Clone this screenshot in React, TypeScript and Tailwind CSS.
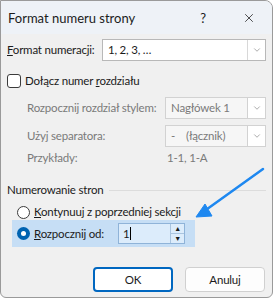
import { ChevronDown, X } from "lucide-react";
import clsx from "clsx";

function Combo({ value, disabled, className }: { value: React.ReactNode; disabled?: boolean; className?: string }) {
  return (
    <div
      className={clsx(
        "flex h-[22px] items-stretch border",
        disabled ? "border-[#d2d2d2] bg-[#f6f6f6] text-[#7a7a7a]" : "border-[#b8b8b8] bg-white text-[#1b1b1b]",
        className
      )}
    >
      <div className="flex flex-1 items-center whitespace-pre px-[5px]">{value}</div>
      <div
        className={clsx(
          "flex w-[18px] items-center justify-center border-l",
          disabled ? "border-[#d2d2d2] bg-white" : "border-[#d8d8d8] bg-white"
        )}
      >
        <ChevronDown className="h-[10px] w-[10px] text-[#7a7a7a]" strokeWidth={1.5} />
      </div>
    </div>
  );
}

function Radio({ checked }: { checked?: boolean }) {
  return checked ? (
    <div className="flex h-[13px] w-[13px] shrink-0 items-center justify-center rounded-full bg-[#0063b1]">
      <div className="h-[5px] w-[5px] rounded-full bg-white" />
    </div>
  ) : (
    <div className="h-[13px] w-[13px] shrink-0 rounded-full border border-[#3b3b3b] bg-white" />
  );
}

export default function App() {
  return (
    <div className="relative h-[300px] w-[274px] bg-white font-['Segoe_UI','Lato',sans-serif] text-[11.5px] leading-[14px] tracking-[-0.2px] text-[#1b1b1b]">
      <div className="flex h-[298px] w-[273px] flex-col overflow-hidden rounded-tr-lg rounded-b-md border border-[#9a9a9a] bg-[#f0f0f0]">
        {/* title bar */}
        <div className="flex h-[33px] shrink-0 items-center bg-[#eef2f7] pl-[7px]">
          <span className="flex-1 text-[13px] tracking-normal">Format numeru strony</span>
          <span className="w-[46px] text-center text-[13px]">?</span>
          <div className="flex w-[46px] items-center justify-center">
            <X className="h-[14px] w-[14px]" strokeWidth={1.3} />
          </div>
        </div>

        <div className="flex flex-col whitespace-nowrap px-[6px] pt-[5px]">
          <div className="flex items-center">
            <span className="w-[95px]">
              <u>F</u>ormat numeracji:
            </span>
            <Combo value="1, 2, 3, …" className="flex-1" />
          </div>

          <div className="mt-[13px] flex h-[14px] items-center gap-[4px]">
            <div className="h-[14px] w-[14px] rounded-[3px] border border-[#3b3b3b] bg-white" />
            <span>
              Dołącz numer <u>r</u>ozdziału
            </span>
          </div>

          <div className="mt-[9px] flex flex-col pl-[20px] text-[#7a7a7a]">
            <div className="flex items-center">
              <span className="w-[138px]">Rozpocznij rozdział stylem:</span>
              <Combo value="Nagłówek 1" disabled className="flex-1" />
            </div>
            <div className="mt-[6px] flex items-center">
              <span className="w-[138px]">Użyj separatora:</span>
              <Combo value="-    (łącznik)" disabled className="flex-1" />
            </div>
            <div className="mt-[4px] flex h-[14px] items-center">
              <span className="w-[138px]">Przykłady:</span>
              <span className="pl-[2px]">1-1, 1-A</span>
            </div>
          </div>

          <div className="mt-[18px] flex h-[14px] items-center gap-[6px]">
            <span>Numerowanie stron</span>
            <div className="h-px flex-1 bg-[#dcdcdc]" />
          </div>

          <div className="mt-[8px] flex h-[14px] items-center gap-[4px] pl-[10px]">
            <Radio />
            <span>
              <u>K</u>ontynuuj z poprzedniej sekcji
            </span>
          </div>

          <div className="mt-[1px] ml-[5px] flex h-[27px] w-[183px] items-center bg-[#c6def5] pl-[5px]">
            <Radio checked />
            <span className="ml-[4px] w-[84px]">
              <u>R</u>ozpocznij od:
            </span>
            <div className="flex h-[21px] w-[67px] items-stretch border border-[#8fb3d8] bg-[#dcecfb]">
              <div className="flex flex-1 items-center pl-[4px]">
                1<span className="ml-px inline-block h-[13px] w-px bg-black" />
              </div>
              <div className="flex w-[14px] flex-col border-l border-[#a9c4df]">
                <div className="flex flex-1 items-center justify-center border-b border-[#a9c4df] text-[7px] leading-none">▲</div>
                <div className="flex flex-1 items-center justify-center text-[7px] leading-none">▼</div>
              </div>
            </div>
          </div>

          <div className="mt-[20px] flex justify-end gap-[12px] pr-[1px]">
            <button className="h-[25px] w-[80px] rounded-[4px] border-2 border-[#0067c0] bg-white">OK</button>
            <button className="h-[25px] w-[80px] rounded-[4px] border border-[#d0d0d0] bg-[#fdfdfd]">Anuluj</button>
          </div>
        </div>
      </div>

      {/* annotation arrow */}
      <svg className="pointer-events-none absolute left-0 top-0" width="274" height="300">
        <line x1="263" y1="169" x2="203" y2="212" stroke="#1e88f0" strokeWidth="2.5" strokeLinecap="round" />
        <path d="M196 217 L205 204 L212 216 Z" fill="#1e88f0" stroke="#1e88f0" strokeWidth="1" strokeLinejoin="round" />
      </svg>
    </div>
  );
}
